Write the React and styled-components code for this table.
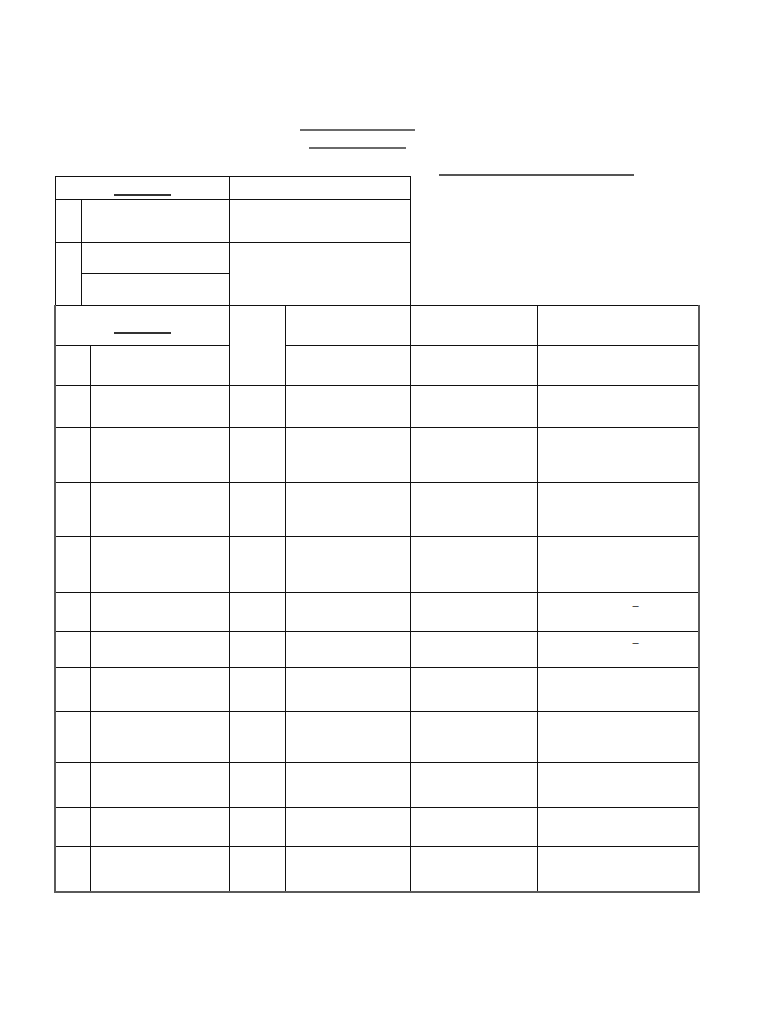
import React from "react"
import styled, { createGlobalStyle } from "styled-components"

const GlobalStyle = createGlobalStyle`
  html, body {
    margin: 0;
    padding: 0;
    background: #fff;
  }
  body {
    font-family: "Liberation Sans", Arial, sans-serif;
    color: #222;
  }
`

const mainCols = [35, 139, 56, 125, 127, 162]
const rowHeights = [40, 42, 55, 54, 56, 39, 36, 44, 51, 45, 39, 46]
const dashes = { 5: 7, 6: 5 }

const App = () => {
  return (
    <>
      <GlobalStyle />
      <Page>
        <TitleLine width={115} offset={245} />
        <TitleLine width={97} offset={254} gap={16} />

        <TopRow>
          <TopTable>
            <colgroup>
              <col style={{ width: "26px" }} />
              <col style={{ width: "148px" }} />
              <col style={{ width: "181px" }} />
            </colgroup>
            <tbody>
              <Row h={23}>
                <HeadCell colSpan={2} pad={3}>
                  <Blank />
                </HeadCell>
                <Cell />
              </Row>
              <Row h={43}>
                <Cell />
                <Cell />
                <Cell />
              </Row>
              <Row h={31}>
                <Cell rowSpan={2} open />
                <Cell />
                <Cell rowSpan={2} open />
              </Row>
              <Row h={31}>
                <Cell open />
              </Row>
            </tbody>
          </TopTable>
          <SideLine />
        </TopRow>

        <MainTable>
          <colgroup>
            {mainCols.map((w, i) => (
              <col key={`col ${i}`} style={{ width: `${w}px` }} />
            ))}
          </colgroup>
          <tbody>
            <Row h={40}>
              <HeadCell colSpan={2} pad={11}>
                <Blank />
              </HeadCell>
              <Cell rowSpan={2} />
              <Cell />
              <Cell />
              <Cell />
            </Row>
            {rowHeights.map((h, index) => (
              <Row key={`row ${index}`} h={h}>
                <Cell />
                <Cell />
                {index > 0 && <Cell />}
                <Cell />
                <Cell />
                <Cell>
                  {dashes[index] !== undefined && (
                    <Dash top={dashes[index]}>–</Dash>
                  )}
                </Cell>
              </Row>
            ))}
          </tbody>
        </MainTable>
      </Page>
    </>
  )
}

export default App

const Page = styled.div`
  width: 644px;
  padding: 129px 0 120px 55px;
`
const TitleLine = styled.div`
  width: ${props => props.width}px;
  margin-left: ${props => props.offset}px;
  margin-top: ${props => props.gap || 0}px;
  border-top: 2px solid #6a6a6a;
`
const TopRow = styled.div`
  display: flex;
  align-items: flex-start;
  margin-top: 27px;
`
const TopTable = styled.table`
  width: 355px;
  table-layout: fixed;
  border-collapse: collapse;
  border: 1px solid #111;
  border-bottom: none;
`
const SideLine = styled.div`
  width: 195px;
  margin: -2px 0 0 28px;
  border-top: 2px solid #555;
`
const MainTable = styled.table`
  width: 645px;
  margin: 0 0 0 -1px;
  table-layout: fixed;
  border-collapse: collapse;
  border: 2px solid #5a5a5a;
  border-top-width: 1px;
  border-top-color: #222;
`
const Row = styled.tr`
  height: ${props => props.h}px;
`
const Cell = styled.td`
  border: 1px solid #111;
  border-bottom-style: ${props => (props.open ? "none" : "solid")};
  padding: 0;
  vertical-align: top;
`
const HeadCell = styled(Cell)`
  text-align: center;
  vertical-align: bottom;
  padding-bottom: ${props => props.pad}px;
  line-height: 0;
`
const Blank = styled.span`
  display: inline-block;
  width: 57px;
  border-bottom: 2px solid #333;
`
const Dash = styled.span`
  display: block;
  margin: ${props => props.top}px 0 0 95px;
  font-size: 11px;
  line-height: 11px;
  color: #222;
`
